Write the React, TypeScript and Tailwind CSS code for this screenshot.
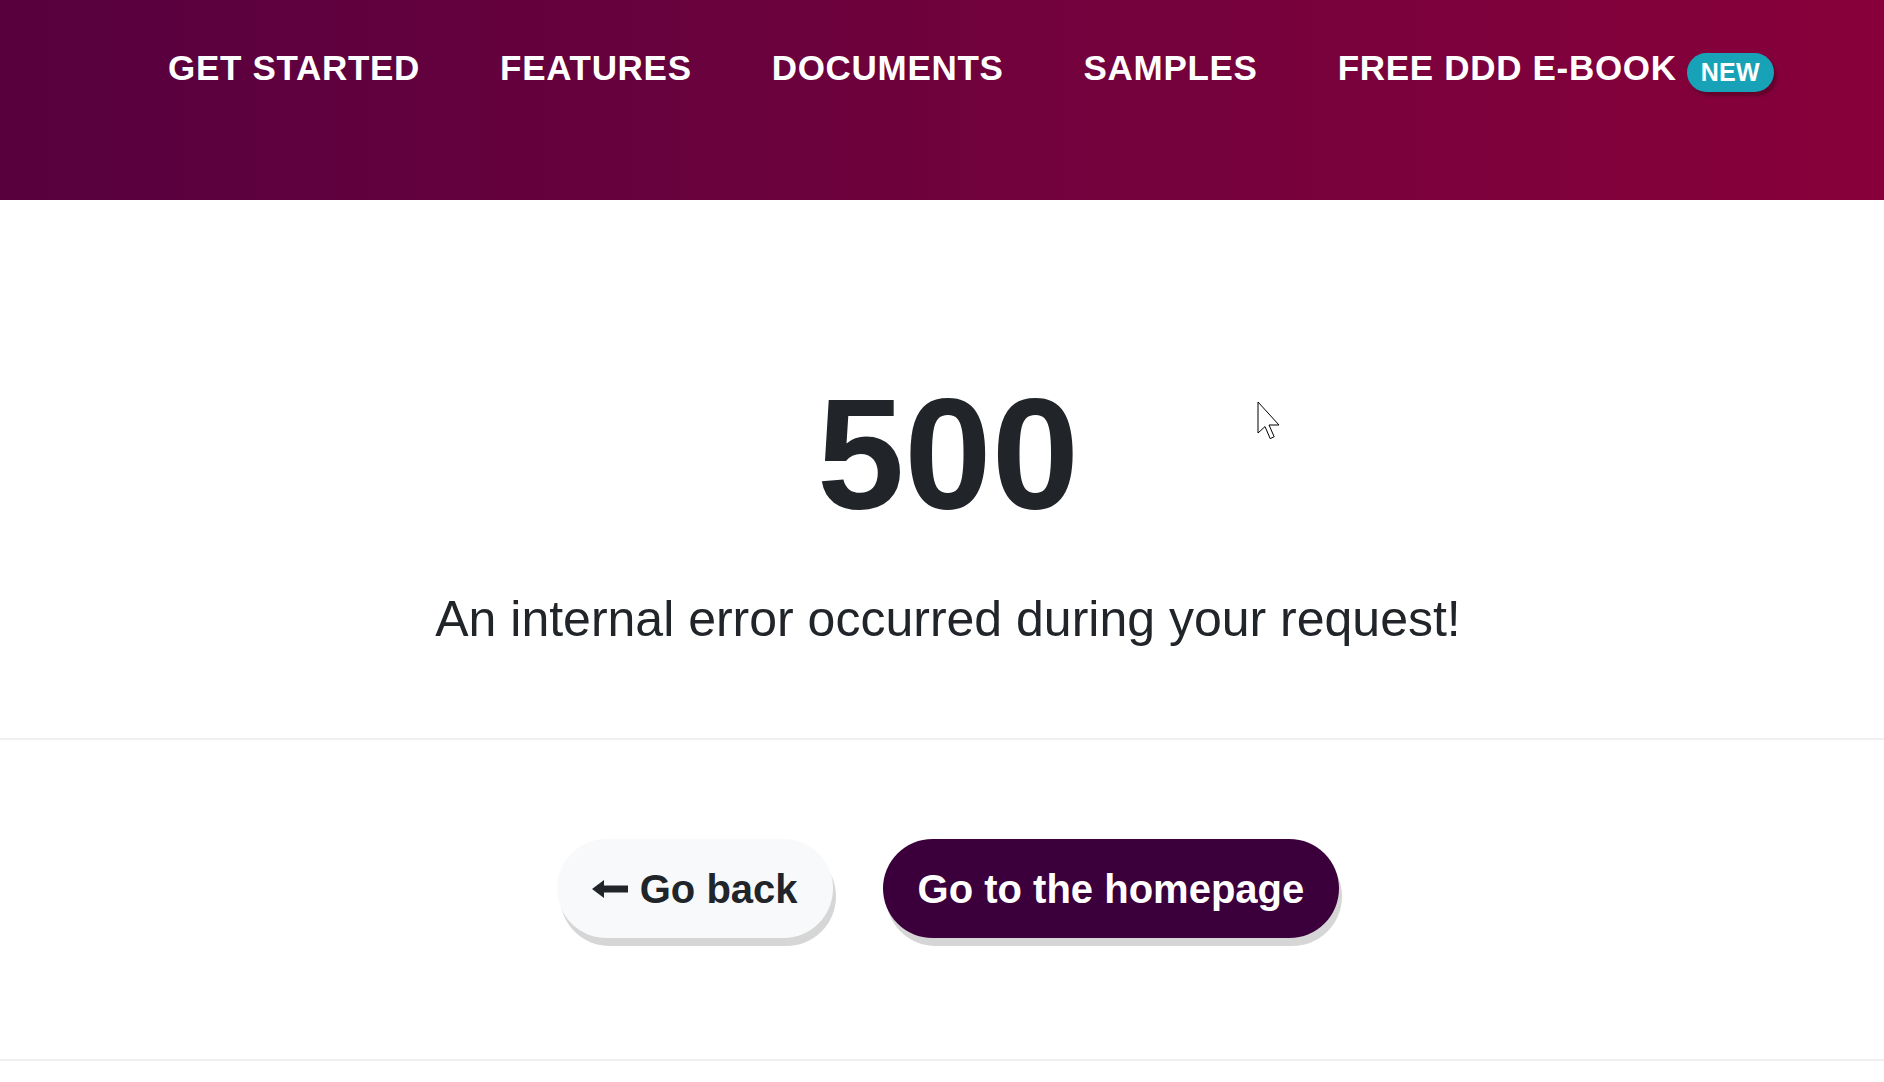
const navItems = ["GET STARTED", "FEATURES", "DOCUMENTS", "SAMPLES"];

function BackArrow() {
  return (
    <svg width="36" height="18" viewBox="0 0 36 18" className="mr-3 shrink-0" aria-hidden="true">
      <path d="M0 9 L12 0 L12 5.5 L36 5.5 L36 12.5 L12 12.5 L12 18 Z" fill="currentColor" />
    </svg>
  );
}

function Cursor() {
  return (
    <svg
      width="26"
      height="40"
      viewBox="0 0 13 20"
      className="pointer-events-none absolute left-[1257px] top-[401px]"
      aria-hidden="true"
    >
      <path
        d="M0.5 0.5 L0.5 16 L4 12.8 L6.6 18.8 L8.6 17.9 L6 12 L11 12 Z"
        fill="#ffffff"
        stroke="#000000"
        strokeWidth="0.5"
        strokeLinejoin="round"
      />
    </svg>
  );
}

export default function App() {
  return (
    <div className="relative min-h-[1082px] bg-white font-['Liberation_Sans',Arial,sans-serif] text-[#212529]">
      <header className="h-[200px] bg-linear-to-r from-[#57003e] to-[#88003a]">
        <nav className="flex items-start pl-[128px] pt-[50px]">
          {navItems.map((item) => (
            <a
              key={item}
              href="#"
              className="px-[40px] text-[35px] font-bold leading-none tracking-[0.7px] text-white"
            >
              {item}
            </a>
          ))}
          <a href="#" className="flex items-start px-[40px] text-white">
            <span className="text-[35px] font-bold leading-none tracking-[0.7px]">FREE DDD E-BOOK</span>
            <span className="ml-[10px] mt-[3px] flex h-[39px] items-center rounded-full bg-[#17a2b8] px-[14px] text-[25px] font-bold leading-none tracking-[0.3px] text-white shadow-[3px_4px_3px_rgba(0,0,0,0.25)]">
              NEW
            </span>
          </a>
        </nav>
      </header>

      <main>
        <section className="pl-3 pt-[160px] text-center">
          <h1 className="text-[157px] font-bold leading-[1.2]">500</h1>
          <p className="mt-[34px] text-[50px] leading-[1.5]">An internal error occurred during your request!</p>
        </section>

        <div className="mt-[81px] h-[2px] bg-[#f0f0f0]" />

        <div className="flex justify-center gap-[50px] pl-3 pt-[99px]">
          <a
            href="#"
            className="flex h-[99px] items-center rounded-full bg-[#f8f9fa] px-[35px] text-[40px] font-bold leading-none text-[#212529] shadow-[3px_8px_0_rgba(0,0,0,0.16)]"
          >
            <BackArrow />
            Go back
          </a>
          <a
            href="#"
            className="flex h-[99px] items-center rounded-full bg-[#3b003b] px-[35px] text-[40px] font-bold leading-none text-white shadow-[3px_8px_0_rgba(0,0,0,0.16)]"
          >
            Go to the homepage
          </a>
        </div>

        <div className="mt-[121px] h-[2px] bg-[#f0f0f0]" />
      </main>

      <Cursor />
    </div>
  );
}
